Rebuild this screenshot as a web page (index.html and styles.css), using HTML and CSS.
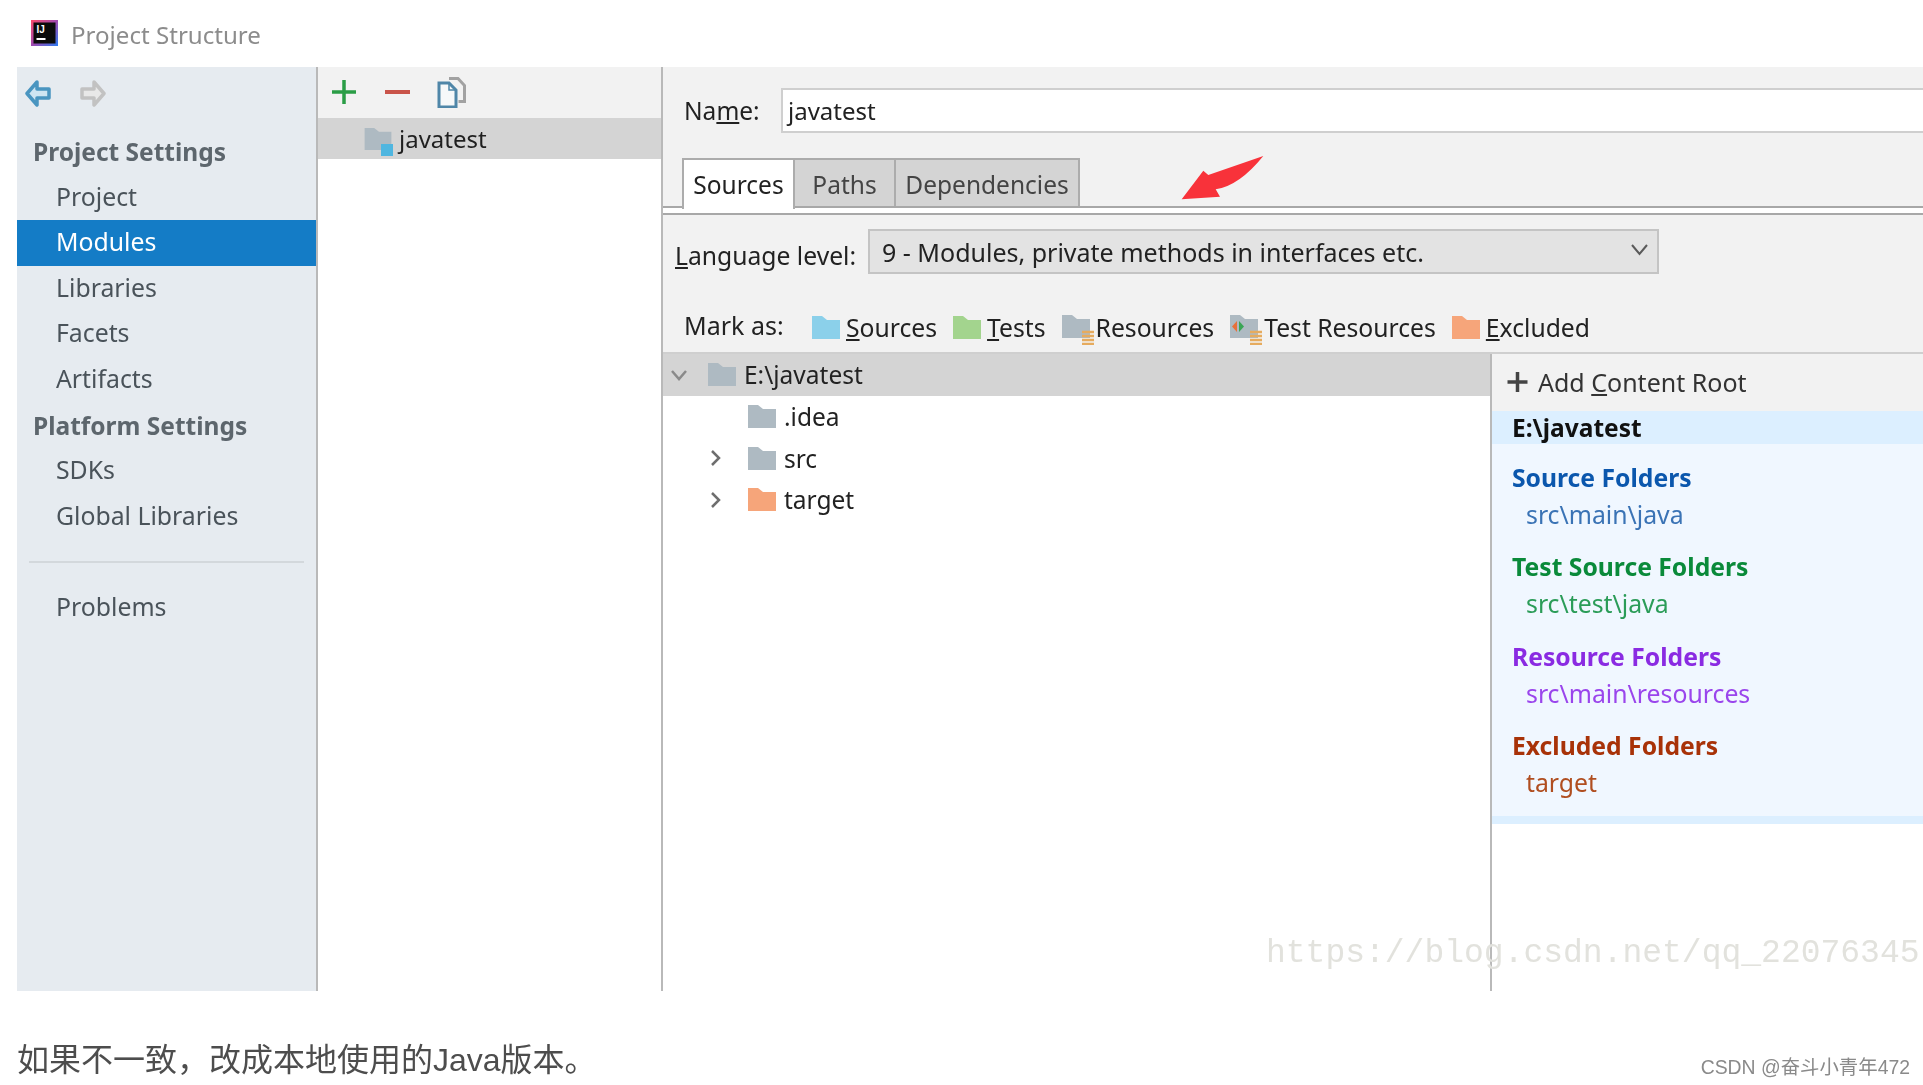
FILE: index.html
```html
<!DOCTYPE html>
<html lang="zh">
<head>
<meta charset="utf-8">
<title>Project Structure</title>
<link rel="stylesheet" href="styles.css">
</head>
<body>
<svg class="defs" width="0" height="0" aria-hidden="true">
  <symbol id="folder" viewBox="0 0 28 23"><path d="M0 0h10l5 4h13v19H0z"/></symbol>
</svg>
<div class="page">
  <header class="titlebar">
    <svg class="logo" viewBox="0 0 27 26">
      <defs><linearGradient id="lg" x1="0" y1="0" x2="1" y2="1"><stop offset="0" stop-color="#fc4a6a"/><stop offset="0.5" stop-color="#a04ab0"/><stop offset="1" stop-color="#2a7bf0"/></linearGradient></defs>
      <rect width="27" height="26" fill="url(#lg)"/>
      <rect x="2.5" y="2.5" width="22" height="21" fill="#0b0b0b"/>
      <text x="5.5" y="12.5" class="logo-text">IJ</text>
      <rect x="5.5" y="18" width="9" height="2" fill="#fff"/>
    </svg>
    <span class="title">Project Structure</span>
  </header>

  <main class="window">
    <nav class="sidebar">
      <div class="nav-tools">
        <svg class="nav-arrow" viewBox="0 0 26 27"><path d="M12 2 2 13.500 12 25v-7h12V9H12z" fill="#cfe5f2" stroke="#4a95c0" stroke-width="3.500" stroke-linejoin="round"/></svg>
        <svg class="nav-arrow" viewBox="0 0 26 27"><path d="M14 2l10 11.500L14 25v-7H2V9h12z" fill="#e8e8e8" stroke="#c2c2c2" stroke-width="3.500" stroke-linejoin="round"/></svg>
      </div>
      <div class="nav-head">Project Settings</div>
      <div class="nav-item">Project</div>
      <div class="nav-item active">Modules</div>
      <div class="nav-item">Libraries</div>
      <div class="nav-item">Facets</div>
      <div class="nav-item">Artifacts</div>
      <div class="nav-head">Platform Settings</div>
      <div class="nav-item">SDKs</div>
      <div class="nav-item">Global Libraries</div>
      <div class="nav-sep"></div>
      <div class="nav-item">Problems</div>
    </nav>

    <section class="modules">
      <div class="mod-tools">
        <svg class="tool-plus" viewBox="0 0 24 24"><path d="M12 0v24M0 12h24" stroke="#2a9d46" stroke-width="3.500" fill="none"/></svg>
        <svg class="tool-minus" viewBox="0 0 25 6"><rect width="25" height="4" y="1" fill="#c9544a"/></svg>
        <svg class="tool-copy" viewBox="0 0 29 31"><path d="M12 1.500h9l6.500 7v16h-6" fill="none" stroke="#a2a2a2" stroke-width="3"/><path d="M2 6h10l7 7v17H2z" fill="#f6f8f9" stroke="#4f86a8" stroke-width="3"/><path d="M12 6v7h7" fill="none" stroke="#4f86a8" stroke-width="1.500"/></svg>
      </div>
      <div class="mod-row">
        <span class="mod-icon">
          <svg class="folder-svg grey"><use href="#folder"/></svg>
          <span class="mod-badge"></span>
        </span>
        <span>javatest</span>
      </div>
    </section>

    <section class="detail">
      <div class="name-row">
        <label class="name-label">Na<u>m</u>e:</label>
        <div class="name-input">javatest</div>
      </div>
      <div class="tabs">
        <div class="tab active">Sources</div>
        <div class="tab">Paths</div>
        <div class="tab">Dependencies</div>
      </div>
      <div class="tab-strip"></div>
      <div class="lang-row">
        <label class="lang-label"><u>L</u>anguage level:</label>
        <div class="lang-select">
          <span>9 - Modules, private methods in interfaces etc.</span>
          <svg class="select-chev" viewBox="0 0 17 12"><path d="M1 1l7.500 9L16 1" fill="none" stroke="#5a5a5a" stroke-width="2"/></svg>
        </div>
      </div>
      <div class="mark-row">
        <span class="mark-label">Mark as:</span>
        <span class="mark-items">
          <span class="mark"><svg class="folder-svg blue"><use href="#folder"/></svg><span><u>S</u>ources</span></span>
          <span class="mark"><svg class="folder-svg green"><use href="#folder"/></svg><span><u>T</u>ests</span></span>
          <span class="mark mark-tight">
            <svg class="res-svg" viewBox="0 0 32 30"><path d="M0 0h10l5 4h13v19H0z" fill="#aebac2"/><path d="M20 17h12M20 21h12M20 25h12M20 29h12" stroke="#e6ab5e" stroke-width="2.500"/></svg>
            <span>Resources</span></span>
          <span class="mark mark-tight">
            <svg class="res-svg" viewBox="0 0 32 30"><path d="M0 0h10l5 4h13v19H0z" fill="#aebac2"/><path d="M7 6 2 11.500 7 17z" fill="#e8703a"/><path d="M9 6l5 5.500L9 17z" fill="#3aa655"/><path d="M20 17h12M20 21h12M20 25h12M20 29h12" stroke="#e6ab5e" stroke-width="2.500"/></svg>
            <span>Test Resources</span></span>
          <span class="mark"><svg class="folder-svg orange"><use href="#folder"/></svg><span><u>E</u>xcluded</span></span>
        </span>
      </div>
      <div class="split">
        <div class="tree">
          <div class="tree-row selected">
            <svg class="chev" viewBox="0 0 16 12"><path d="M1 2l7 8 7-8" fill="none" stroke="#8a8a8a" stroke-width="2.500"/></svg>
            <svg class="folder-svg grey"><use href="#folder"/></svg>
            <span>E:\javatest</span>
          </div>
          <div class="tree-row nested">
            <span class="chev"></span>
            <svg class="folder-svg grey"><use href="#folder"/></svg>
            <span>.idea</span>
          </div>
          <div class="tree-row nested">
            <svg class="chev" viewBox="0 0 16 16"><path d="M4 1l7 7-7 7" fill="none" stroke="#6e6e6e" stroke-width="2.500"/></svg>
            <svg class="folder-svg grey"><use href="#folder"/></svg>
            <span>src</span>
          </div>
          <div class="tree-row nested">
            <svg class="chev" viewBox="0 0 16 16"><path d="M4 1l7 7-7 7" fill="none" stroke="#6e6e6e" stroke-width="2.500"/></svg>
            <svg class="folder-svg orange"><use href="#folder"/></svg>
            <span>target</span>
          </div>
        </div>
        <aside class="roots">
          <div class="add-root">
            <svg class="add-plus" viewBox="0 0 20 20"><path d="M10 0v20M0 10h20" stroke="#444" stroke-width="3.500" fill="none"/></svg>
            <span>Add <u>C</u>ontent Root</span>
          </div>
          <div class="root-path">E:\javatest</div>
          <div class="root-body">
            <div class="group src"><div class="group-head">Source Folders</div><div class="group-path">src\main\java</div></div>
            <div class="group test"><div class="group-head">Test Source Folders</div><div class="group-path">src\test\java</div></div>
            <div class="group res"><div class="group-head">Resource Folders</div><div class="group-path">src\main\resources</div></div>
            <div class="group exc"><div class="group-head">Excluded Folders</div><div class="group-path">target</div></div>
          </div>
          <div class="root-end"></div>
        </aside>
      </div>
    </section>

    <svg class="red-arrow" viewBox="0 0 84 46"><path d="M82.300 1 27.300 20 22.300 15.700 .7 44.300 39 41.700 34.700 34.300Q58 31 82.300 1z" fill="#f8323a"/></svg>
    <div class="watermark">https://blog.csdn.net/qq_22076345</div>
  </main>

  <footer class="caption-row">
    <p class="caption">如果不一致，改成本地使用的Java版本。</p>
    <span class="credit">CSDN @奋斗小青年472</span>
  </footer>
</div>
</body>
</html>
```
FILE: styles.css
```css
* { box-sizing: border-box; }
html, body { margin: 0; padding: 0; background: #fff; overflow: hidden; }
body { font-family: "Noto Sans", "Noto Sans CJK SC", sans-serif; font-size: 25px; color: #2b2b2b; }
.defs { position: absolute; }
.page { width: 1923px; height: 1085px; display: flex; flex-direction: column; }

.titlebar { height: 67px; padding-left: 31px; display: flex; align-items: center; gap: 13px; flex: none; filter: blur(0.4px); }
.logo { width: 27px; height: 26px; margin-top: -2px; }
.logo-text { font: bold 10px "Liberation Sans", sans-serif; fill: #fff; }
.title { color: #8c8c8c; font-size: 24.100px; margin-top: 2px; }

.window { position: relative; height: 924px; flex: none; display: flex; padding-left: 17px; filter: blur(0.4px); }

.sidebar { width: 301px; flex: none; background: #e6ebf0; border-right: 2px solid #b9b9b9; color: #3f4a52; }
.nav-tools { height: 62px; padding: 13px 0 0 8px; display: flex; gap: 29px; }
.nav-arrow { width: 26px; height: 27px; }
.nav-head { height: 45.600px; line-height: 45.600px; padding-left: 16px; font-weight: 700; font-size: 24.500px; color: #5d666d; }
.nav-item { height: 45.600px; line-height: 43px; padding-left: 39px; font-size: 24.800px; color: #4a535a; }
.nav-item.active { background: #147cc6; color: #fff; }
.nav-sep { height: 45.600px; margin: 0 12px 0 12px; display: flex; align-items: center; }
.nav-sep::before { content: ""; flex: 1; height: 2px; background: #d3d8dc; }

.modules { width: 345px; flex: none; border-right: 2px solid #b9b9b9; background: #fff; }
.mod-tools { height: 51px; background: #f2f2f2; display: flex; align-items: flex-start; padding: 13px 0 0 14px; }
.tool-plus { width: 24px; height: 24px; }
.tool-minus { width: 25px; height: 6px; margin: 9px 0 0 29px; }
.tool-copy { width: 29px; height: 31px; margin: -3px 0 0 27px; }
.mod-row { height: 41px; background: #d4d4d4; display: flex; align-items: center; gap: 6px; padding-left: 45px; color: #1f1f1f; font-size: 24px; }
.mod-icon { position: relative; width: 30px; height: 28px; margin-top: 6px; display: block; }
.mod-icon .folder-svg { width: 30px; height: 22px; display: block; }
.mod-badge { position: absolute; right: 0; bottom: 0; width: 12px; height: 12px; background: #4fb6e0; }

.folder-svg { width: 28px; height: 23px; flex: none; }
.folder-svg.grey { fill: #aebac2; }
.folder-svg.blue { fill: #8bd0ea; }
.folder-svg.green { fill: #a3d48e; }
.folder-svg.orange { fill: #f6a57a; }

.detail { flex: 1; min-width: 0; background: #f2f2f2; display: flex; flex-direction: column; color: #222; }
.name-row { display: flex; align-items: center; height: 45px; margin-top: 21px; padding-left: 21px; flex: none; }
.name-label { width: 97px; font-size: 24.500px; }
.name-input { flex: 1; height: 45px; line-height: 41px; padding-left: 5px; background: #fff; border: 2px solid #cfcfcf; border-right: 0; font-size: 24px; }
.tabs { display: flex; height: 48px; margin-top: 25px; padding-left: 19px; flex: none; }
.tab { height: 48px; line-height: 49px; padding: 0 4px; background: #d4d4d4; border: 2px solid #acacac; border-bottom: 0; border-left: 0; color: #444; text-align: center; font-size: 24.500px; }
.tab:nth-child(2) { width: 101px; }
.tab:nth-child(3) { width: 184px; }
.tab.active { width: 113px; background: #fff; border-left: 2px solid #acacac; color: #222; height: 51px; position: relative; }
.tab-strip { height: 9px; margin-top: 0; background: #fff; border-top: 2px solid #a8a8a8; border-bottom: 2px solid #a8a8a8; flex: none; }
.lang-row { display: flex; height: 45px; margin-top: 14px; padding-left: 12px; flex: none; }
.lang-label { width: 193px; line-height: 54px; white-space: nowrap; font-size: 24.700px; }
.lang-select { width: 791px; height: 45px; padding: 0 12px; display: flex; justify-content: space-between; align-items: center; background: #e3e3e3; border: 2px solid #c4c4c4; white-space: nowrap; }
.select-chev { width: 17px; height: 12px; margin-right: -3px; margin-top: -3px; }
.mark-row { height: 78px; padding: 28px 0 0 21px; display: flex; align-items: center; flex: none; }
.mark-label { width: 128px; margin-top: -5px; }
.mark-items { display: flex; gap: 16px; font-size: 24.700px; }
.mark { display: flex; align-items: center; gap: 6px; white-space: nowrap; }
.mark-tight { gap: 2px; }
.res-svg { width: 32px; height: 30px; margin-top: 5px; flex: none; }

.split { flex: 1; min-height: 0; display: flex; border-top: 2px solid #cfcfcf; background: #fff; }
.tree { width: 827px; flex: none; background: #fff; font-size: 24.500px; }
.tree-row { height: 41.700px; display: flex; align-items: center; padding-left: 8px; color: #222; }
.tree-row.selected { background: #d4d4d4; }
.tree-row.nested { padding-left: 45px; }
.chev { width: 16px; height: 16px; margin-right: 21px; flex: none; display: block; }
.tree-row.nested .chev { margin-right: 24px; }
.tree-row svg.folder-svg { margin-right: 8px; }
.roots { flex: 1; min-width: 0; border-left: 2px solid #b9b9b9; display: flex; flex-direction: column; align-self: stretch; }
.add-root { height: 57px; background: #f2f2f2; display: flex; align-items: center; gap: 10px; padding-left: 15px; padding-bottom: 2px; flex: none; color: #333; }
.add-plus { width: 21px; height: 20px; }
.root-path { height: 33px; line-height: 33px; background: #dcefff; padding-left: 20px; font-weight: 700; font-size: 24.500px; color: #111; flex: none; }
.root-body { height: 372px; background: #f0f7ff; padding-left: 20px; padding-top: 15px; flex: none; }
.group { height: 89.400px; }
.group-head { height: 37px; line-height: 37px; font-weight: 700; font-size: 24.700px; }
.group-path { height: 37px; line-height: 36px; padding-left: 14px; font-size: 24.800px; }
.group.src { color: #0b57ad; }
.group.src .group-path { color: #3a73b5; }
.group.test { color: #0a8a3a; }
.group.test .group-path { color: #2b9c58; }
.group.res { color: #8a2be2; }
.group.res .group-path { color: #9a45ec; }
.group.exc { color: #a83208; }
.group.exc .group-path { color: #b04e20; }
.root-end { height: 8px; background: #dcefff; flex: none; }

.red-arrow { position: absolute; left: 1181px; top: 88px; width: 84px; height: 46px; }
.watermark { position: absolute; left: 1266px; top: 867px; font: 33px/40px "Liberation Mono", monospace; color: #e2e2dd; white-space: nowrap; }

.caption-row { flex: 1; display: flex; justify-content: space-between; padding: 0 13px 0 17px; position: relative; }
.caption { margin: 47px 0 0; font: 32px/44px "Liberation Sans", "Noto Sans CJK SC", sans-serif; color: #4d4d4d; }
.credit { margin-top: 63px; font: 19.400px/26px "Liberation Sans", "Noto Sans CJK SC", sans-serif; color: #8a8a8a; }
```
